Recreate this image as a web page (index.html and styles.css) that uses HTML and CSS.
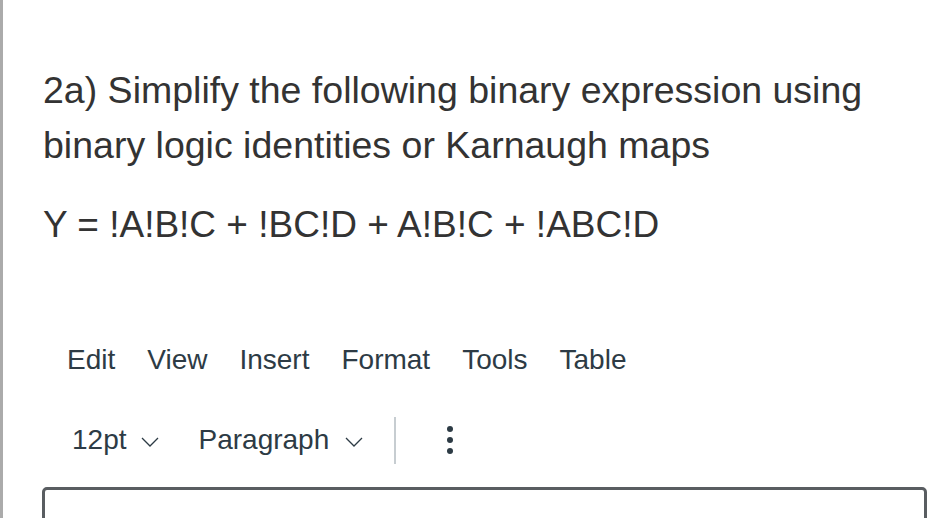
FILE: index.html
```html
<!DOCTYPE html>
<html>
<head>
<meta charset="utf-8">
<link rel="stylesheet" href="styles.css">
</head>
<body>
<div class="page">
  <div class="content">
    <p class="question">2a) Simplify the following binary expression using binary logic identities or Karnaugh maps</p>
    <p class="equation">Y = !A!B!C + !BC!D + A!B!C + !ABC!D</p>
    <div class="menubar">
      <span class="menu">Edit</span>
      <span class="menu">View</span>
      <span class="menu">Insert</span>
      <span class="menu">Format</span>
      <span class="menu">Tools</span>
      <span class="menu">Table</span>
    </div>
    <div class="toolbar">
      <span class="select size">12pt <svg class="chev" width="18" height="10" viewBox="0 0 18 10"><path d="M1 1 L9 9 L17 1" fill="none" stroke="#2d3b45" stroke-width="1.3"/></svg></span>
      <span class="select para">Paragraph <svg class="chev" width="18" height="10" viewBox="0 0 18 10"><path d="M1 1 L9 9 L17 1" fill="none" stroke="#2d3b45" stroke-width="1.3"/></svg></span>
      <span class="sep"></span>
      <span class="more"><i></i><i></i><i></i></span>
    </div>
    <div class="editor"></div>
  </div>
</div>
</body>
</html>
```
FILE: styles.css
```css
html, body {
  margin: 0;
  padding: 0;
  background: #fff;
}
.page {
  height: 518px;
  overflow: hidden;
  border-left: 3px solid #ababab;
}
.content {
  padding: 63px 0 0 40px;
  font-family: "Liberation Sans", Arial, sans-serif;
  color: #333;
}
.question {
  margin: 0;
  font-size: 37.5px;
  line-height: 55px;
  width: 880px;
}
.equation {
  margin: 24px 0 0 0;
  font-size: 37px;
  line-height: 55px;
}
.menubar {
  display: flex;
  gap: 32px;
  margin: 88px 0 0 24px;
  font-size: 28px;
  line-height: 40px;
  color: #2d3b45;
}
.toolbar {
  display: flex;
  align-items: center;
  margin: 36px 0 0 29px;
  font-size: 28px;
  line-height: 48px;
  color: #2d3b45;
}
.select {
  display: flex;
  align-items: center;
  gap: 14px;
}
.size {
  margin-right: 40px;
}
.para {
  gap: 16px;
  margin-right: 31px;
}
.chev {
  margin-top: 4px;
}
.sep {
  width: 2px;
  height: 47px;
  background: #c7cdd1;
}
.more {
  display: flex;
  flex-direction: column;
  gap: 5px;
  margin-left: 51px;
}
.more i {
  display: block;
  width: 6px;
  height: 6px;
  border-radius: 50%;
  background: #2d3b45;
}
.editor {
  margin: 23px 0 0 -1px;
  width: 879px;
  height: 60px;
  border: 3px solid #595d61;
  border-radius: 5px;
}
```
